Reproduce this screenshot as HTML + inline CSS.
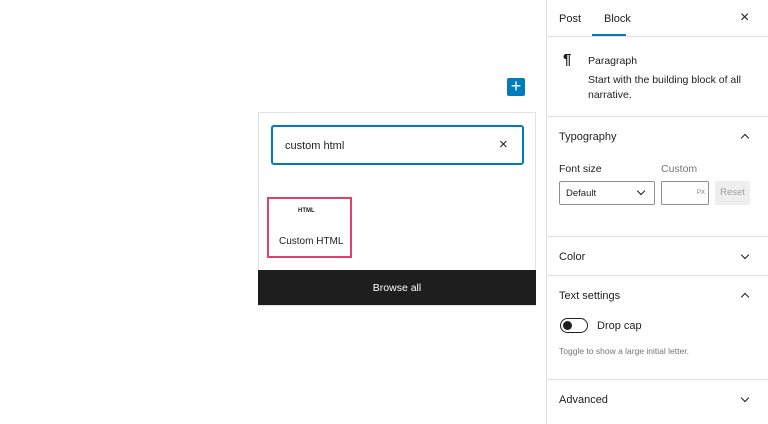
<!DOCTYPE html>
<html><head><style>
*{box-sizing:border-box;margin:0;padding:0}
body{width:768px;height:424px;background:#fff;font-family:"Liberation Sans",sans-serif;color:#1e1e1e;position:relative;overflow:hidden;font-size:10px}
.a{position:absolute}
.line{position:absolute;left:547px;width:221px;height:1px;background:#e0e0e0}
.chev{position:absolute;width:6px;height:6px;border-right:1.5px solid #1e1e1e;border-bottom:1.5px solid #1e1e1e}
.dn{transform:rotate(45deg)}
.up{transform:rotate(-135deg)}
</style></head><body>
<div class="a" style="left:507px;top:78px;width:18px;height:18px;background:#007cba;border-radius:2px;color:#fff;font-size:18px;line-height:17px;text-align:center">+</div>
<div class="a" style="left:258px;top:112px;width:278px;height:194px;border:1px solid #dde1e6;background:#fff"></div>
<div class="a" style="left:271px;top:125px;width:253px;height:40px;border:2px solid #007cba;border-radius:3px"></div>
<div class="a" style="left:285px;top:140px;font-size:11px">custom html</div>
<div class="a" style="left:499px;top:136px;font-size:15px">×</div>
<div class="a" style="left:267px;top:197px;width:85px;height:61px;border:2px solid #e2416b"></div>
<div class="a" style="left:298px;top:208px;font-size:6px;font-weight:bold">HTML</div>
<div class="a" style="left:279px;top:236px;font-size:10px">Custom HTML</div>
<div class="a" style="left:258px;top:270px;width:278px;height:35px;background:#1e1e1e;color:#fff;text-align:center;line-height:37px;font-size:10.5px">Browse all</div>

<div class="a" style="left:546px;top:0;width:1px;height:424px;background:#e0e0e0"></div>
<div class="a" style="left:559px;top:13px;font-size:11px">Post</div>
<div class="a" style="left:604px;top:13px;font-size:11px">Block</div>
<div class="a" style="left:592px;top:34px;width:34px;height:2px;background:#007cba"></div>
<div class="a" style="left:740px;top:9px;font-size:16px">×</div>
<div class="line" style="top:36px"></div>
<div class="a" style="left:563px;top:51px;font-size:15px;font-weight:bold">¶</div>
<div class="a" style="left:588px;top:55px;font-size:10.5px">Paragraph</div>
<div class="a" style="left:588px;top:73px;font-size:10.5px;line-height:15px;width:170px">Start with the building block of all narrative.</div>
<div class="line" style="top:116px"></div>
<div class="a" style="left:559px;top:131px;font-size:11px">Typography</div>
<div class="chev up" style="left:742px;top:135px"></div>
<div class="a" style="left:559px;top:163px;font-size:10.5px">Font size</div>
<div class="a" style="left:661px;top:163px;font-size:10.5px;color:#757575">Custom</div>
<div class="a" style="left:559px;top:181px;width:96px;height:24px;border:1px solid #8c8f94;border-radius:2px"></div>
<div class="a" style="left:566px;top:188px;font-size:9.5px">Default</div>
<div class="chev dn" style="left:638px;top:188px"></div>
<div class="a" style="left:661px;top:181px;width:48px;height:24px;border:1px solid #8c8f94;border-radius:2px"></div>
<div class="a" style="left:697px;top:190px;font-size:6px;color:#757575">PX</div>
<div class="a" style="left:715px;top:181px;width:35px;height:24px;background:#eee;color:#a0a0a0;font-size:9.5px;text-align:center;line-height:24px;border-radius:2px">Reset</div>
<div class="line" style="top:236px"></div>
<div class="a" style="left:559px;top:251px;font-size:11px">Color</div>
<div class="chev dn" style="left:742px;top:252px"></div>
<div class="line" style="top:275px"></div>
<div class="a" style="left:559px;top:290px;font-size:11px">Text settings</div>
<div class="chev up" style="left:742px;top:294px"></div>
<div class="a" style="left:560px;top:318px;width:28px;height:15px;border:1px solid #1e1e1e;border-radius:8px"></div>
<div class="a" style="left:563px;top:321px;width:9px;height:9px;background:#1e1e1e;border-radius:50%"></div>
<div class="a" style="left:597px;top:320px;font-size:11px">Drop cap</div>
<div class="a" style="left:559px;top:346px;font-size:8.5px;color:#757575">Toggle to show a large initial letter.</div>
<div class="line" style="top:379px"></div>
<div class="a" style="left:559px;top:394px;font-size:11px">Advanced</div>
<div class="chev dn" style="left:742px;top:395px"></div>
</body></html>
